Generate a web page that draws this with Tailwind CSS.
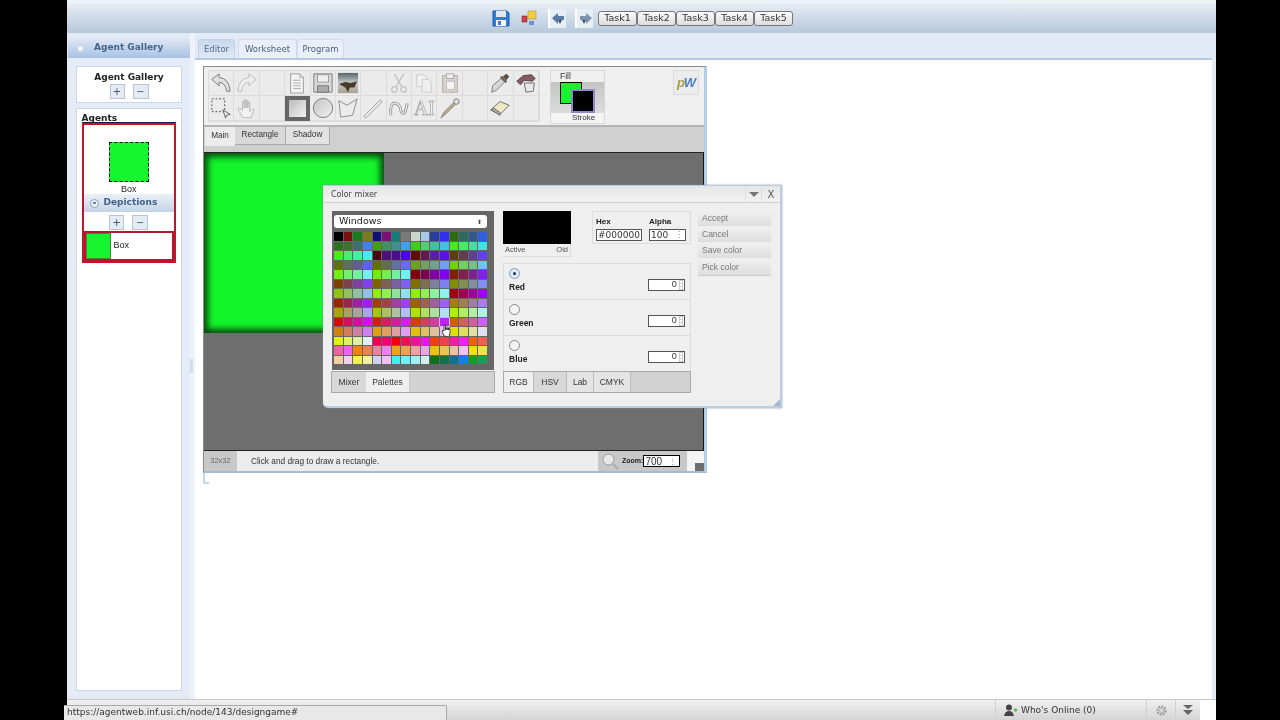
<!DOCTYPE html>
<html lang="en">
<head>
    <meta charset="UTF-8">
    <title>Design Game - Editor</title>
    <script src="https://cdn.jsdelivr.net/npm/@tailwindcss/browser@4"></script>
</head>
<body class="bg-black">
<div class="relative w-[1280px] h-[720px] overflow-hidden bg-black pl-[67px] font-['Liberation_Sans',sans-serif] text-[#222] blur-[0.35px]">
    <div class="w-[1149px] h-full flex flex-col bg-[#e2eaf6]">

        <!-- top bar -->
        <div class="h-[33px] shrink-0 flex items-center pl-[425px] pb-[1px] border-t-[4px] border-[#eef2f8] bg-gradient-to-b from-[#e6ecf4] to-[#b6c8dc]">
            <svg class="w-[18px] h-[18px]" viewBox="0 0 18 18"><path d="M1 2h14l2 2v13H1z" fill="#2f7fd6" stroke="#1d5a9e"/><rect x="4" y="2" width="10" height="6" fill="#dfe8f2"/><rect x="4" y="11" width="10" height="6" fill="#f4f6f8"/><rect x="6" y="12" width="3" height="4" fill="#2f7fd6"/></svg>
            <svg class="w-[16px] h-[16px] ml-[11px]" viewBox="0 0 16 16"><rect x="7" y="1" width="8" height="8" fill="#f0cc40" stroke="#b59a30" stroke-width=".6"/><rect x="1" y="6" width="5" height="6" fill="#c8404a" stroke="#8a2a30" stroke-width=".6"/><rect x="8" y="11" width="5" height="4" fill="#6a96d8"/></svg>
            <div class="ml-[11px] w-[18px] h-[19px] flex items-center justify-center bg-[#e8eef5] border-l-2 border-white">
                <svg class="w-[13px] h-[13px]" viewBox="0 0 13 13"><path d="M0 6 6 1v3h6v4H6v4z" fill="#5a7aa8"/><path d="M6 8h4l-2 4z" fill="#3d4f66"/></svg>
            </div>
            <div class="ml-[9px] w-[18px] h-[19px] flex items-center justify-center bg-[#e8eef5] border-l-2 border-white">
                <svg class="w-[13px] h-[13px]" viewBox="0 0 13 13"><path d="M13 6 7 1v3H1v4h6v4z" fill="#7d93ad"/><path d="M3 8h4l-2 4z" fill="#3d4f66"/></svg>
            </div>
            <div class="ml-[5px] flex font-['DejaVu_Sans',sans-serif] text-[9.5px] text-[#333]">
                <span class="w-[39px] h-[15px] flex items-center justify-center rounded-[3px] border border-[#777] bg-gradient-to-b from-[#fbfbfb] to-[#dedede]">Task1</span>
                <span class="w-[39px] h-[15px] flex items-center justify-center rounded-[3px] border border-[#777] bg-gradient-to-b from-[#fbfbfb] to-[#dedede]">Task2</span>
                <span class="w-[39px] h-[15px] flex items-center justify-center rounded-[3px] border border-[#777] bg-gradient-to-b from-[#fbfbfb] to-[#dedede]">Task3</span>
                <span class="w-[39px] h-[15px] flex items-center justify-center rounded-[3px] border border-[#777] bg-gradient-to-b from-[#fbfbfb] to-[#dedede]">Task4</span>
                <span class="w-[39px] h-[15px] flex items-center justify-center rounded-[3px] border border-[#777] bg-gradient-to-b from-[#fbfbfb] to-[#dedede]">Task5</span>
            </div>
        </div>

        <div class="flex-1 min-h-0 flex">
            <!-- agent gallery panel -->
            <aside class="w-[122px] ml-px mt-[5px] mb-[3px] shrink-0 flex flex-col bg-[#e4ecf8] font-['DejaVu_Sans',sans-serif]">
                <div class="h-[20px] shrink-0 flex items-center pl-[9px] bg-gradient-to-b from-[#e0e8f5] to-[#a8c2e4]">
                    <span class="w-[7px] h-[7px] rounded-full bg-[#f4f6fa] border border-[#c8d4e4]"></span>
                    <span class="ml-[10px] text-[9px] font-bold text-[#46648c]">Agent Gallery</span>
                </div>
                <div class="flex-1 min-h-0 flex flex-col px-[8px] pt-[8px] pb-[5px] gap-[5px]">
                    <div class="h-[37px] shrink-0 bg-white border-[0.5px] border-[#ccd6e4] flex flex-col items-center pt-[5px]">
                        <span class="text-[9px] leading-[11px] font-bold text-[#222]">Agent Gallery</span>
                        <div class="flex gap-[8px] mt-[1px]">
                            <span class="w-[15px] h-[15px] flex items-center justify-center bg-[#e4ebf4] border border-[#b8c4d2] text-[10px] text-[#456]">+</span>
                            <span class="w-[16px] h-[15px] flex items-center justify-center bg-[#e4ebf4] border border-[#b8c4d2] text-[10px] text-[#456]">−</span>
                        </div>
                    </div>
                    <div class="flex-1 min-h-0 bg-white border-[0.5px] border-[#ccd6e4] pl-[4.5px] pr-[5px] pt-[4px]">
                        <div class="h-[9px] text-[9px] leading-[10px] font-bold text-[#222]">Agents</div>
                        <div class="h-[141px] border-t border-[#1a1a5a]">
                            <div class="h-[140px] border-2 border-[#c4142c] flex flex-col">
                                <div class="h-[69px] shrink-0 flex flex-col items-center pt-[17px]">
                                    <div class="w-[40px] h-[40px] shrink-0 bg-[#17f52e] border border-dashed border-black"></div>
                                    <span class="mt-[2px] leading-[10px] font-['Liberation_Sans',sans-serif] text-[9px]">Box</span>
                                </div>
                                <div class="h-[18px] shrink-0 flex items-center pl-[6px] bg-gradient-to-b from-[#eaf0f7] to-[#c4d4e6]">
                                    <span class="w-[9px] h-[9px] rounded-full border border-[#8aa0ba] bg-[#eef3f8] flex items-center justify-center"><span class="w-[3px] h-[2px] bg-[#6a84a4]"></span></span>
                                    <span class="ml-[5px] text-[9px] font-bold text-[#44628a]">Depictions</span>
                                </div>
                                <div class="flex justify-center gap-[8px] mt-[3px]">
                                    <span class="w-[15px] h-[15px] flex items-center justify-center bg-[#e4ebf4] border border-[#b8c4d2] text-[10px] text-[#456]">+</span>
                                    <span class="w-[16px] h-[15px] flex items-center justify-center bg-[#e4ebf4] border border-[#b8c4d2] text-[10px] text-[#456]">−</span>
                                </div>
                                <div class="mt-[1px] h-[30px] border-2 border-[#b8162c] flex items-center font-['Liberation_Sans',sans-serif] text-[9px]">
                                    <span class="w-[25px] h-[26px] bg-[#17f52e] border border-[#3f8a3f]"></span>
                                    <span class="ml-[3px]">Box</span>
                                </div>
                            </div>
                        </div>
                    </div>
                </div>
            </aside>

            <!-- splitter -->
            <div class="w-[5px] shrink-0 flex items-center bg-[#eef2fa]">
                <span class="w-[3px] h-[14px] bg-[#d4dce8]"></span>
            </div>

            <!-- main column -->
            <main class="flex-1 min-w-0 flex flex-col mr-[4px]">
                <div class="h-[27px] shrink-0 flex items-end pl-[3px] border-b-2 border-[#b8c8e0] text-[8.5px] text-[#4a5f7a] font-['DejaVu_Sans',sans-serif]">
                    <span class="w-[37px] h-[19px] flex items-center justify-center bg-gradient-to-b from-[#c8d8ec] to-[#e0e8f5] border border-b-0 border-[#c4d2e4] rounded-t-[3px] mr-[3px] text-[#556d8c]">Editor</span>
                    <span class="w-[59px] h-[19px] flex items-center justify-center bg-[#e8eff8] border border-b-0 border-[#d0dcec] rounded-t-[3px]">Worksheet</span>
                    <span class="w-[47px] h-[19px] flex items-center justify-center bg-[#e8eff8] border border-b-0 border-[#d0dcec] rounded-t-[3px]">Program</span>
                </div>
                <div class="flex-1 min-h-0 bg-white pl-[8px] pt-[6px]">

                    <!-- editor window -->
                    <div class="relative w-[504px] h-[407px] flex flex-col bg-[#ececec] border-l border-t border-[#8a8a8a] border-r-[3px] border-r-[#b4cde6] border-b-2 border-b-[#a4bcd6]">
                        <div class="h-[60px] shrink-0 flex pl-[4px] pt-[3px] bg-[#efefef] border-b-2 border-[#b4b4b4]">
                            <div class="w-[332px] h-[52px] grid grid-cols-13 grid-rows-2 bg-[#ebebeb] border border-[#dcdcdc] [&>div]:flex [&>div]:items-center [&>div]:justify-center [&>div]:border-r [&>div]:border-b [&>div]:border-[#dcdcdc] [&_svg]:w-[22px] [&_svg]:h-[22px]">
                                <div><svg viewBox="0 0 24 24"><path d="M2 8 10 2v4q11 1 12 15h-4Q17 12 10 11v4z" fill="#e0e0e0" stroke="#777"/></svg></div>
                                <div><svg viewBox="0 0 24 24"><path d="M22 8 14 2v4Q3 7 2 21h4q1-9 8-10v4z" fill="#eee" stroke="#bbb"/></svg></div>
                                <div></div>
                                <div><svg viewBox="0 0 24 24"><path d="M5 2h10l4 4v17H5z" fill="#f2f2f2" stroke="#999"/><path d="M15 2v4h4M8 9h8M8 12h8M8 15h8M8 18h8" fill="none" stroke="#aaa"/></svg></div>
                                <div><svg viewBox="0 0 24 24"><path d="M2 2h20v20H2z" fill="#d8d8d8" stroke="#777"/><rect x="6" y="3" width="12" height="8" fill="#eee" stroke="#999"/><rect x="6" y="15" width="12" height="7" fill="#aaa" stroke="#777"/></svg></div>
                                <div><svg viewBox="0 0 24 24"><defs><linearGradient id="sky" x1="0" y1="0" x2="0" y2="1"><stop offset="0" stop-color="#59646c"/><stop offset=".5" stop-color="#c8cdc8"/><stop offset="1" stop-color="#a8a090"/></linearGradient></defs><rect x="1" y="1" width="22" height="22" fill="url(#sky)"/><path d="M2 13 9 11l6 1 7-2-3 7-5 0-2 5-3-5z" fill="#4a3a2a"/></svg></div>
                                <div></div>
                                <div><svg viewBox="0 0 24 24" fill="none" stroke="#c4c4c4" stroke-width="1.5"><path d="M7 2l8 14M17 2 9 16"/><circle cx="7" cy="19" r="3"/><circle cx="17" cy="19" r="3"/></svg></div>
                                <div><svg viewBox="0 0 24 24" fill="#f0f0f0" stroke="#ccc"><path d="M4 3h8l3 3v10H4z"/><path d="M10 8h7l3 3v11H10z"/></svg></div>
                                <div><svg viewBox="0 0 24 24"><rect x="4" y="4" width="16" height="18" fill="#d8d4cc" stroke="#aaa"/><rect x="8" y="2" width="8" height="5" fill="#eee" stroke="#aaa"/><rect x="8" y="10" width="9" height="9" fill="#f4f4f4" stroke="#bbb"/></svg></div>
                                <div></div>
                                <div><svg viewBox="0 0 24 24"><path d="M3 22 4 15 13 7l4 4-9 9z" fill="#d8d8d8" stroke="#777"/><path d="M12 6l2-2 6 6-2 2z" fill="#6a6058"/><path d="M15 5l4-3 3 3-3 4z" fill="#5a5048"/></svg></div>
                                <div><svg viewBox="0 0 24 24"><path d="M10 12h11l-1 9-8 1z" fill="#e8e8e8" stroke="#666"/><path d="M2 10 9 4l9-1 4 4-3 3-9-1-4 5z" fill="#8a5a68" stroke="#443"/></svg></div>

                                <div><svg viewBox="0 0 24 24" fill="none"><rect x="2" y="2" width="14" height="14" stroke="#444" stroke-dasharray="2 2"/><path d="M14 14l8 5-4 1-1 3z" fill="#eee" stroke="#555"/></svg></div>
                                <div><svg viewBox="0 0 24 24"><path d="M7 22 2 13l2-1 3 3V5h2v7-9h2v9-8h2v8-6h2v10l3-3 2 1-4 9z" fill="#f2f2f2" stroke="#b4b4b4"/></svg></div>
                                <div></div>
                                <div class="!border-0"><span class="w-[25px] h-[25px] border-[4px] border-[#666] bg-gradient-to-br from-[#bcbcbc] to-[#f2f2f2]"></span></div>
                                <div><svg viewBox="0 0 24 24"><defs><linearGradient id="sh" x1="0" y1="0" x2="1" y2="1"><stop offset="0" stop-color="#c4c4c4"/><stop offset="1" stop-color="#f0f0f0"/></linearGradient></defs><circle cx="12" cy="12" r="10.5" fill="url(#sh)" stroke="#777"/></svg></div>
                                <div><svg viewBox="0 0 24 24"><path d="M2 4l9 5 11-7-5 18-13 2z" fill="#ececec" stroke="#888"/></svg></div>
                                <div><svg viewBox="0 0 24 24"><path d="M2 21 20 3l2 2L4 23z" fill="#eee" stroke="#999"/></svg></div>
                                <div><svg viewBox="0 0 24 24" fill="none"><path d="M3 20V13Q4 5 9 7t5 8q2 5 5 1l2-9" stroke="#888" stroke-width="3"/><path d="M3 20V13Q4 5 9 7t5 8q2 5 5 1l2-9" stroke="#eee" stroke-width="1.4"/></svg></div>
                                <div><span class="font-['Liberation_Serif',serif] text-[20px] leading-none text-[#f0f0f0] [-webkit-text-stroke:0.6px_#999]">AI</span></div>
                                <div><svg viewBox="0 0 24 24"><path d="M2 23l3-6L16 6l2 2L7 19z" fill="#b8ac88" stroke="#777" stroke-width=".7"/><circle cx="19" cy="5" r="3" fill="#ddd" stroke="#777"/></svg></div>
                                <div></div>
                                <div><svg viewBox="0 0 24 24"><path d="M2 14 12 5l10 4-10 10z" fill="#f0e8c0" stroke="#666"/><path d="M2 14l10 6v-3l-7-5z" fill="#aaa" stroke="#666"/></svg></div>
                                <div></div>
                            </div>
                            <div class="ml-[10px] w-[55px] h-[54px] flex flex-col border border-[#d8d8d8] text-[8px] leading-[10px] text-[#333]">
                                <div class="h-[11px] pl-[9px] bg-[#f0f0f0] text-[8.5px]">Fill</div>
                                <div class="relative h-[32px] bg-gradient-to-b from-[#c4c4c4] to-[#dcdcdc]">
                                    <span class="absolute left-[9px] top-0 w-[22px] h-[22px] bg-[#17f52e] border border-black"></span>
                                    <span class="absolute left-[20px] top-[7px] w-[24px] h-[24px] bg-black border-2 border-[#8f88c8]"></span>
                                </div>
                                <div class="h-[10px] pl-[21px] bg-[#f4f4f4]">Stroke</div>
                            </div>
                            <div class="ml-[68px] w-[26px] h-[25px] flex items-center justify-center bg-[#ececec] border border-[#dcdcdc] font-['Liberation_Sans',sans-serif] font-bold italic text-[13px] tracking-[-1px]">
                                <span class="text-[#a8a040]">p</span><span class="text-[#4a80c8]">W</span>
                            </div>
                        </div>
                        <div class="h-[25px] shrink-0 flex pl-[1px] bg-[#d0d0d0] text-[8.2px] text-[#333]">
                            <span class="w-[30px] h-[19px] flex items-center justify-center bg-[#ececec]">Main</span>
                            <span class="w-[51px] h-[18px] flex items-center justify-center border-r border-b border-[#aaa] bg-[#d8d8d8]">Rectangle</span>
                            <span class="w-[44px] h-[18px] flex items-center justify-center border-r border-b border-[#aaa] bg-[#e2e2e2]">Shadow</span>
                        </div>
                        <div class="flex-1 min-h-0 bg-[#6e6e6e] border-t border-[#222] border-r border-r-[#111]">
                            <div class="w-[180px] h-[180px] bg-[#12f52a] shadow-[inset_0_0_6px_4px_#0a4a10]"></div>
                        </div>
                        <div class="h-[21px] shrink-0 flex items-stretch border-t border-[#222] bg-[#ececec] text-[8.3px]">
                            <span class="w-[33px] shrink-0 flex items-center justify-center bg-[#c8c8c8] text-[#666] text-[7.5px]">32x32</span>
                            <span class="ml-[14px] flex-1 flex items-center text-[#333]">Click and drag to draw a rectangle.</span>
                            <div class="w-[89px] shrink-0 flex items-center bg-[#c8c8c8] pl-[3px]">
                                <svg class="w-[18px] h-[18px]" viewBox="0 0 18 18" fill="none"><circle cx="7.5" cy="7.5" r="5.500" fill="#e8e8e8" stroke="#999"/><path d="M12 12l5 5" stroke="#aaa" stroke-width="2"/></svg>
                                <span class="ml-[3px] text-[7px] font-bold">Zoom:</span>
                                <span class="w-[37px] h-[12px] flex items-center justify-between bg-white border border-black pl-[1px] pr-[3px] text-[10px] text-[#333]">700<span class="text-[7px] text-[#888] leading-[7px]">⋮</span></span>
                            </div>
                            <div class="w-[17px] shrink-0 flex items-end justify-end bg-[#f4f4f4]"><span class="w-[9px] h-[8px] bg-[#6e6e6e]"></span></div>
                        </div>
                        <span class="absolute left-[-1px] bottom-[-13px] w-[6px] h-[11px] bg-white border-l-2 border-b-2 border-[#c4d6ea]"></span>

                    </div>
                </div>
            </main>
        </div>

        <!-- bottom bar -->
        <div class="h-[21px] shrink-0 flex items-stretch pr-[16px] border-t border-[#c8c8c8] bg-white">
            <div class="flex-1 flex items-center justify-end bg-gradient-to-b from-[#f0f0f0] to-[#d4d4d4] text-[#333]">
                <div class="h-full w-[205px] flex items-center pl-[8px] border-l border-[#d0d0d0] font-['DejaVu_Sans',sans-serif] text-[9px]">
                    <svg class="w-[14px] h-[12px]" viewBox="0 0 14 12"><circle cx="5" cy="3.500" r="3" fill="#444"/><path d="M0 12q1-5 5-5t5 5z" fill="#444"/><circle cx="11.500" cy="6" r="1.800" fill="#5cb85c"/></svg>
                    <span class="ml-[3px] pt-[1px] font-medium">Who's Online (0)</span>
                    <span class="ml-auto h-full w-[29px] flex items-center justify-center border-l border-[#d0d0d0]">
                        <svg class="w-[13px] h-[13px]" viewBox="0 0 13 13" fill="none"><circle cx="6.500" cy="6.500" r="4" stroke="#999" stroke-width="2" stroke-dasharray="2 1"/><circle cx="6.500" cy="6.500" r="2" stroke="#aaa"/></svg>
                    </span>
                    <span class="h-full w-[25px] flex items-center justify-center border-l border-[#d0d0d0]">
                        <svg class="w-[12px] h-[11px]" viewBox="0 0 12 11" fill="#666"><path d="M1 0h10L6 4zM1 5h10L6 10z"/></svg>
                    </span>
                </div>
            </div>
        </div>
    </div>

    <!-- browser status tooltip -->
    <div class="absolute left-[64px] top-[705px] w-[383px] h-[15px] flex items-center pl-[3px] bg-[#e8e8e8] border-t border-r border-[#aaa] rounded-tr-[2px] font-['DejaVu_Sans',sans-serif] text-[9px] text-[#333]">https://agentweb.inf.usi.ch/node/143/designgame#</div>

    <!-- color mixer dialog -->
    <div class="absolute left-[323px] top-[185px] w-[459px] h-[223px] flex flex-col bg-[#efefef] border-r-[2px] border-b-[2px] border-t border-[#b6cde2] rounded-bl-[5px] shadow-[0_0_2px_#888]">
        <div class="h-[17px] shrink-0 flex items-center pl-[8px] border-b border-[#cfcfcf] bg-gradient-to-b from-[#e6e6e6] to-[#f2f2f2] font-['DejaVu_Sans',sans-serif] text-[8px] text-[#444]">
            <span class="pt-[1px]">Color mixer</span>
            <span class="ml-auto w-[16px] h-full flex items-center justify-center border-l border-[#ddd]"><span class="border-x-[5px] border-x-transparent border-t-[5px] border-t-[#777]"></span></span>
            <span class="w-[19px] h-full flex items-center justify-center border-l border-[#ddd] text-[10px] text-[#555]">X</span>
        </div>
        <div class="flex-1 min-h-0 flex pl-[8px] pt-[8px] text-[8.5px]">
            <!-- palette side -->
            <div class="w-[164px] shrink-0 flex flex-col">
                <div class="ml-px w-[162px] h-[159px] flex flex-col bg-[#666] pl-[2px] pt-[4px]">
                    <div class="w-[153px] h-[13px] flex items-center justify-between px-[5px] bg-white rounded-[3px] text-[9.5px] text-[#222] font-['DejaVu_Sans',sans-serif]">Windows<span class="text-[6px] leading-[6px] text-[#444]">⬍</span></div>
                    <div id="swatches" class="relative mt-[4px] w-[153px] h-[132px] grid grid-cols-16 grid-rows-14 gap-[1px]"></div>
                </div>
                <div class="mt-px h-[22px] flex border border-[#aaa] text-[#333]">
                    <span class="w-[34px] flex items-center justify-center bg-[#d8d8d8]">Mixer</span>
                    <span class="w-[43px] flex items-center justify-center bg-[#efefef]">Palettes</span>
                    <span class="flex-1 bg-[#d2d2d2] border-l border-[#ccc]"></span>
                </div>
            </div>
            <!-- color values -->
            <div class="ml-[8px] w-[188px] shrink-0 flex flex-col">
                <div class="h-[46px] flex">
                    <div class="w-[68px]">
                        <div class="h-[33px] bg-black"></div>
                        <div class="h-[13px] flex items-center justify-between px-[2px] border-r border-b border-[#ddd] text-[7.5px] text-[#555]"><span>Active</span><span>Old</span></div>
                    </div>
                    <div class="ml-[21px] w-[99px] h-[33px] flex border border-[#ddd] pl-[3px] pt-[5px] gap-[7px] text-[8px] leading-[10px] font-bold">
                        <div class="flex flex-col"><span>Hex</span><span class="mt-[2px] w-[46px] h-[12px] flex items-center justify-center bg-white border border-[#555] font-normal text-[9px] text-[#333] font-['DejaVu_Sans',sans-serif]">#000000</span></div>
                        <div class="flex flex-col"><span>Alpha</span><span class="mt-[2px] w-[37px] h-[12px] flex items-center justify-between pl-[1px] pr-[2px] bg-white border border-[#555] font-normal text-[9px] text-[#333] font-['DejaVu_Sans',sans-serif]">100<span class="text-[8px] text-[#777]">⋮</span></span></div>
                    </div>
                </div>
                <div class="mt-[6px] flex flex-col border border-[#ddd] border-b-0 h-[108px] text-[8.5px] font-bold">
                    <div class="h-[36px] shrink-0 relative border-b border-[#ddd]">
                        <span class="absolute left-[5px] top-[4px] w-[11px] h-[11px] rounded-full border border-[#7d9cc4] bg-[#dfe8f4] flex items-center justify-center"><span class="w-[3px] h-[3px] rounded-full bg-[#234]"></span></span>
                        <span class="absolute left-[5px] top-[17px]">Red</span>
                        <span class="absolute right-[5px] top-[15px] w-[37px] h-[12px] flex items-center justify-end pr-[1px] gap-[2px] bg-white border border-[#555] font-normal text-[9px] text-[#333]">0<span class="text-[8px] text-[#777] border border-[#ccc] leading-[8px]">:</span></span>
                    </div>
                    <div class="h-[36px] shrink-0 relative border-b border-[#ddd]">
                        <span class="absolute left-[5px] top-[4px] w-[11px] h-[11px] rounded-full border border-[#888] bg-[#f4f4f4]"></span>
                        <span class="absolute left-[5px] top-[17px]">Green</span>
                        <span class="absolute right-[5px] top-[15px] w-[37px] h-[12px] flex items-center justify-end pr-[1px] gap-[2px] bg-white border border-[#555] font-normal text-[9px] text-[#333]">0<span class="text-[8px] text-[#777] border border-[#ccc] leading-[8px]">:</span></span>
                    </div>
                    <div class="h-[35px] shrink-0 relative">
                        <span class="absolute left-[5px] top-[4px] w-[11px] h-[11px] rounded-full border border-[#888] bg-[#f4f4f4]"></span>
                        <span class="absolute left-[5px] top-[17px]">Blue</span>
                        <span class="absolute right-[5px] top-[15px] w-[37px] h-[12px] flex items-center justify-end pr-[1px] gap-[2px] bg-white border border-[#555] font-normal text-[9px] text-[#333]">0<span class="text-[8px] text-[#777] border border-[#ccc] leading-[8px]">:</span></span>
                    </div>
                </div>
                <div class="h-[22px] flex border border-[#aaa] text-[#333]">
                    <span class="w-[29px] flex items-center justify-center bg-[#efefef]">RGB</span>
                    <span class="w-[33px] flex items-center justify-center bg-[#d8d8d8] border-l border-[#bbb]">HSV</span>
                    <span class="w-[27px] flex items-center justify-center bg-[#e4e4e4] border-l border-[#bbb]">Lab</span>
                    <span class="w-[37px] flex items-center justify-center bg-[#e4e4e4] border-l border-[#bbb]">CMYK</span>
                    <span class="flex-1 bg-[#d2d2d2] border-l border-[#bbb]"></span>
                </div>
            </div>
            <!-- actions -->
            <div class="ml-[7px] w-[73px] h-[65px] flex flex-col text-[#777] border-b border-[#ccc]">
                <span class="h-[16px] flex items-center pl-[4px] bg-gradient-to-b from-[#f0f0f0] to-[#dedede] border-b border-[#eee]">Accept</span>
                <span class="h-[16px] flex items-center pl-[4px] bg-gradient-to-b from-[#f0f0f0] to-[#dedede] border-b border-[#eee]">Cancel</span>
                <span class="h-[16px] flex items-center pl-[4px] bg-gradient-to-b from-[#f0f0f0] to-[#dedede] border-b border-[#eee]">Save color</span>
                <span class="h-[16px] flex items-center pl-[4px] bg-gradient-to-b from-[#f0f0f0] to-[#dedede]">Pick color</span>
            </div>
        </div>
        <span class="absolute right-0 bottom-0 border-l-[7px] border-l-transparent border-b-[7px] border-b-[#a8b8c8]"></span>
    </div>
</div>

<script>
    // Windows palette, row by row
    const palette = [
        '000000 7b1010 1a7a20 7a7a20 10107a 7a107a 1a7a7a 7a7a7a c8d8c8 a8c8e8 2a3f9a 3030f0 2e6a10 2e6a60 2e5a90 3060e0',
        '2e7020 3f7030 3f7070 3f80f0 40a010 409060 409090 40a0f0 40d010 50d070 40c0a0 40c0f0 40f010 40f060 40e0a0 40e0f0',
        '40f010 40f070 40f0a0 40f0f0 500010 50107a 4a1090 5000f0 601000 601a50 5a20a0 5a10f0 604000 604050 604090 6040f0',
        '607010 607050 606090 6060f0 607000 607040 6070a0 6070f0 70a020 70a060 70a090 70a0f0 70d010 70d060 70c090 70c0f0',
        '70f010 70f070 70f0a0 70f0f0 70f000 70f050 70f0a0 70f0f0 800010 800050 8000a0 8000f0 802000 802050 802090 8020f0',
        '804000 804050 8040a0 8040f0 806000 806050 8060a0 8060f0 807000 807050 8080a0 8080f0 809000 809050 8090a0 8090f0',
        '90c010 90c060 90c0a0 90c0f0 90f000 90f050 90e0a0 90e0f0 90f000 90f050 90f0a0 90f0f0 a00010 a00050 a000a0 a000f0',
        'a02010 a02050 a020a0 a020f0 a04000 a04050 a040a0 a040f0 a06000 a06050 a060a0 a060f0 a08010 a08050 a080a0 a080f0',
        'b0a010 b0a060 b0a0a0 b0a0f0 b0c010 b0c060 b0c0a0 b0c0f0 b0e010 b0e060 b0e0a0 b0e0f0 b0f010 b0f060 b0f0a0 b0f0f0',
        'd01010 d01060 d010a0 d010f0 d02010 d02060 d020a0 d020f0 d04010 d04060 d040a0 c020f0 d06010 d06060 d060a0 d060f0',
        'd08010 d08060 d080a0 d080f0 e0a010 e0a060 e0a0a0 e0a0f0 e0c010 e0c060 e0c0a0 e0c0f0 e0e010 e0e060 e0e0a0 e0e0f0',
        'e0f010 e0f060 e0f0a0 e0f0f0 f00050 f00070 f00010 f01050 f010a0 f010f0 f04010 f04050 f020a0 f020f0 f06010 f06050',
        'f060a0 f060f0 f08010 f08050 f080a0 f080f0 f0a010 f0a050 f0a0a0 f0a0f0 f0c010 f0c050 f0c0a0 f0c0f0 f0e010 f0e050',
        'f0d0a0 f0d0f0 f0f050 f0f0a0 d0d0f0 f0c0f0 40f0f0 70f0f0 a0f0f0 d0f0f0 107020 107050 107090 1080f0 10a020 10a060'
    ];
    const grid = document.getElementById('swatches');
    palette.forEach((row, r) => row.split(' ').forEach((hex, c) => {
        const cell = document.createElement('div');
        cell.style.background = '#' + hex;
        if (r === 9 && c === 11) cell.className = 'outline outline-white/60';
        grid.appendChild(cell);
    }));
    // hand pointer over the selected swatch
    const hand = document.createElement('div');
    hand.className = 'absolute left-[107px] top-[91px] w-[12px] h-[14px]';
    hand.innerHTML = '<svg viewBox="0 0 12 14" class="w-full h-full"><path d="M3 13 1 8l1-1 1 1V2h1.500v5-2h1.500v2-2h1.500v2-1h1.500v4l-1 4z" fill="#fff" stroke="#222" stroke-width=".8"/></svg>';
    grid.appendChild(hand);
</script>
</body>
</html>
